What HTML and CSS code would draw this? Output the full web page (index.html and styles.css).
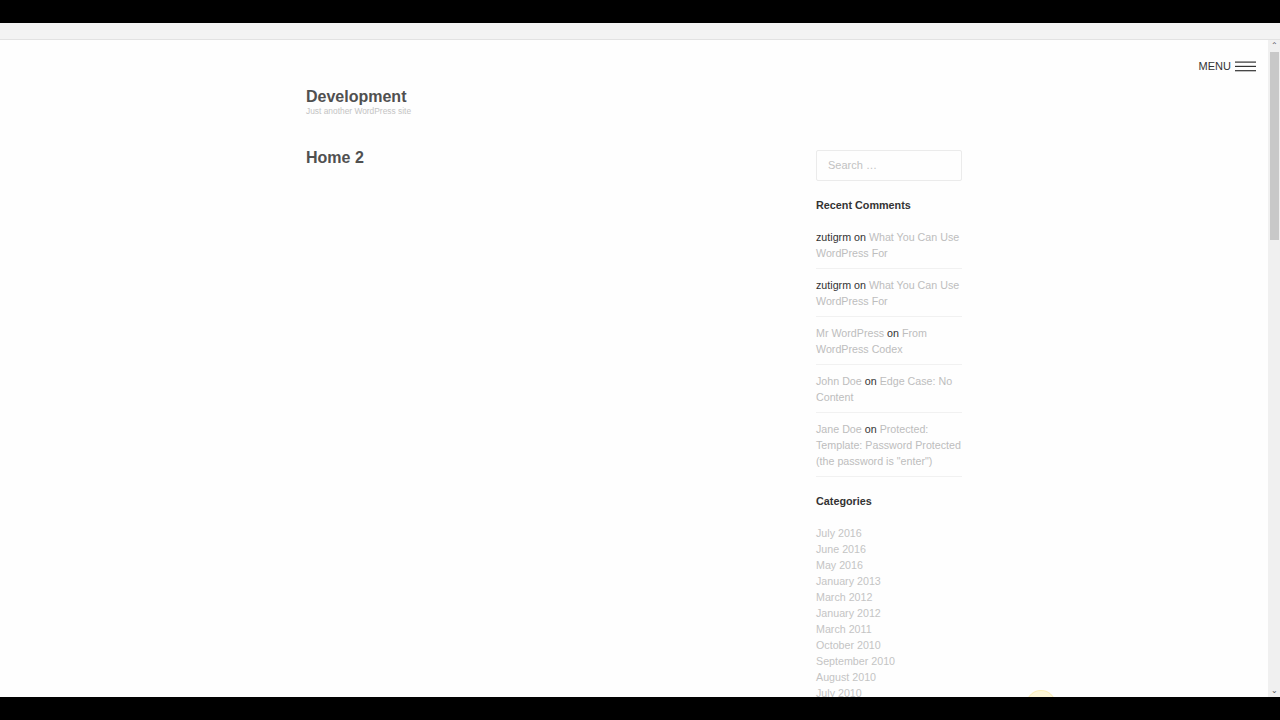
FILE: index.html
```html
<!DOCTYPE html>
<html>
<head>
<meta charset="utf-8">
<title>Development</title>
<link rel="stylesheet" href="styles.css">
</head>
<body>
<div class="topbar"></div>
<div class="toolbar"></div>
<div class="viewport">
  <div class="page">
    <div class="menubar">
      <span class="menu-label">MENU</span>
      <svg class="burger" width="21" height="11" viewBox="0 0 21 11"><rect x="0" y="0.5" width="21" height="1.2" fill="#333"/><rect x="0" y="4.8" width="21" height="1.2" fill="#333"/><rect x="0" y="9.1" width="21" height="1.2" fill="#333"/></svg>
    </div>
    <div class="wrap">
      <div class="branding">
        <div class="site-title">Development</div>
        <div class="site-desc">Just another WordPress site</div>
      </div>
      <div class="columns">
        <main class="main">
          <h1 class="entry-title">Home 2</h1>
        </main>
        <aside class="sidebar">
          <div class="search">Search …</div>
          <h2 class="widget-title">Recent Comments</h2>
          <ul class="comments">
            <li><span class="dark">zutigrm on</span> <span class="lnk">What You Can Use WordPress For</span></li>
            <li><span class="dark">zutigrm on</span> <span class="lnk">What You Can Use WordPress For</span></li>
            <li><span class="lnk">Mr WordPress</span> <span class="dark">on</span> <span class="lnk">From WordPress Codex</span></li>
            <li><span class="lnk">John Doe</span> <span class="dark">on</span> <span class="lnk">Edge Case: No Content</span></li>
            <li><span class="lnk">Jane Doe</span> <span class="dark">on</span> <span class="lnk">Protected: Template: Password Protected (the password is "enter")</span></li>
          </ul>
          <h2 class="widget-title cat">Categories</h2>
          <ul class="archive">
            <li>July 2016</li>
            <li>June 2016</li>
            <li>May 2016</li>
            <li>January 2013</li>
            <li>March 2012</li>
            <li>January 2012</li>
            <li>March 2011</li>
            <li>October 2010</li>
            <li>September 2010</li>
            <li>August 2010</li>
            <li>July 2010</li>
          </ul>
        </aside>
      </div>
    </div>
    <div class="cursor-glow"></div>
  </div>
  <div class="scrollbar">
    <div class="arrow up">&#8963;</div>
    <div class="thumb"></div>
    <div class="track-rest"></div>
    <div class="arrow down">&#8964;</div>
  </div>
</div>
<div class="bottombar"></div>
</body>
</html>
```
FILE: styles.css
```css
html, body {
  margin: 0;
  padding: 0;
  height: 720px;
  overflow: hidden;
  background: #000;
  font-family: "Liberation Sans", Arial, sans-serif;
}
.topbar {
  height: 23px;
  background: #000;
}
.toolbar {
  height: 16px;
  background: #f3f3f3;
  border-bottom: 1px solid #e2e2e2;
}
.viewport {
  height: 657px;
  display: flex;
  background: #fff;
  overflow: hidden;
}
.page {
  flex: 1;
  position: relative;
  overflow: hidden;
  background: #fefefe;
}
.menubar {
  display: flex;
  justify-content: flex-end;
  align-items: center;
  gap: 4px;
  padding: 19px 12px 0 0;
  height: 14px;
}
.menu-label {
  font-size: 11px;
  line-height: 14px;
  color: #333;
}
.burger {
  display: block;
}
.wrap {
  width: 656px;
  margin: 14px auto 0;
}
.site-title {
  font-size: 16px;
  font-weight: bold;
  line-height: 19px;
  color: #505050;
}
.site-desc {
  font-size: 8.4px;
  line-height: 10px;
  color: #c4c4c4;
}
.columns {
  display: flex;
  justify-content: space-between;
  margin-top: 32px;
}
.main {
  flex: 1;
}
.entry-title {
  margin: 0;
  font-size: 16px;
  line-height: 20px;
  font-weight: bold;
  color: #505050;
}
.sidebar {
  width: 146px;
  padding-top: 2px;
  font-size: 10.7px;
  line-height: 16px;
}
.search {
  box-sizing: border-box;
  height: 31px;
  border: 1px solid #ebebeb;
  border-radius: 2px;
  padding: 0 11px;
  line-height: 29px;
  color: #c2c2c2;
  font-size: 11px;
}
.widget-title {
  margin: 16px 0 0;
  font-size: 10.8px;
  line-height: 16px;
  font-weight: bold;
  color: #333;
}
.comments {
  list-style: none;
  margin: 16px 0 0;
  padding: 0;
}
.comments li {
  padding-bottom: 7px;
  border-bottom: 1px solid #f1f1f1;
  margin-bottom: 8px;
}
.dark {
  color: #333;
}
.lnk {
  color: #bdbdbd;
}
.widget-title.cat {
  margin-top: 16px;
}
.archive {
  list-style: none;
  margin: 16px 0 0;
  padding: 0;
  color: #c4c4c4;
}
.archive li {
  line-height: 16px;
}
.cursor-glow {
  position: absolute;
  left: 1026px;
  top: 650px;
  width: 28px;
  height: 28px;
  border-radius: 50%;
  background: rgba(255, 240, 170, 0.45);
  border: 1px solid rgba(250, 230, 150, 0.5);
}
.scrollbar {
  width: 12px;
  background: #f0f0f0;
  display: flex;
  flex-direction: column;
  align-items: center;
}
.arrow {
  height: 12px;
  font-size: 8px;
  line-height: 12px;
  color: #555;
  text-align: center;
}
.thumb {
  width: 9px;
  height: 188px;
  background: #c8c8c8;
}
.track-rest {
  flex: 1;
}
```
